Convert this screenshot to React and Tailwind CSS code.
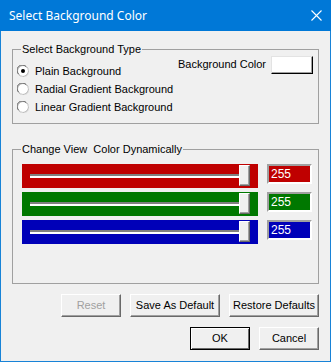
import React, { useState } from 'react';

const SLIDERS = [
  { key: 'r', bg: 'bg-[#bf0000]' },
  { key: 'g', bg: 'bg-[#007800]' },
  { key: 'b', bg: 'bg-[#0000b8]' },
];

const RADIOS = ['Plain Background', 'Radial Gradient Background', 'Linear Gradient Background'];

const Radio = ({ checked }) => (
  <svg width="12" height="12" viewBox="0 0 12 12" className="shrink-0">
    <circle cx="6" cy="6" r="5.5" fill="#ffffff" stroke="#a0a0a0" />
    <path d="M1.5 9 A5 5 0 0 1 9 1.5" fill="none" stroke="#696969" strokeWidth="1" />
    <path d="M3 10.5 A5 5 0 0 0 10.5 3" fill="none" stroke="#e3e3e3" strokeWidth="1" />
    {checked && <circle cx="6" cy="6" r="2" fill="#000000" />}
  </svg>
);

const Btn = ({ children, w, disabled, primary }) => (
  <button
    className={`h-[23px] ${w} bg-[#f0f0f0] text-[11px] leading-none border ${
      primary ? 'border-black' : 'border-t-white border-l-white border-b-[#696969] border-r-[#696969]'
    } ${primary ? 'shadow-[inset_1px_1px_0_#fff,inset_-1px_-1px_0_#696969]' : 'shadow-[inset_-1px_-1px_0_#a0a0a0]'} ${
      disabled ? 'text-[#a0a0a0]' : 'text-black'
    }`}
  >
    {children}
  </button>
);

export default function App() {
  const [type, setType] = useState(0);

  return (
    <div className="w-[331px] h-[362px] flex flex-col bg-[#f0f0f0] border-x border-b border-[#1883d7] font-['Liberation_Sans',Arial,sans-serif] text-[11px] text-black select-none">
      {/* title bar */}
      <div className="h-[31px] -mx-px bg-[#0078d7] flex items-center justify-between pl-[9px] pr-[9px] text-white font-['Noto_Sans',sans-serif] text-[12px]">
        <span>Select Background Color</span>
        <svg width="11" height="11" viewBox="0 0 11 11">
          <path d="M0.5 0.5 L10.5 10.5 M10.5 0.5 L0.5 10.5" stroke="#fff" strokeWidth="1.1" />
        </svg>
      </div>

      <div className="flex flex-col px-[11px]">
        {/* background type */}
        <fieldset className="mt-[12px] border border-[#a0a0a0] flex">
          <legend className="ml-[8px] px-[1px] leading-[13px]">Select Background Type</legend>
          <div className="flex w-full">
            <div className="flex flex-col pt-[6px] pb-[7px] pl-[4px] flex-1">
              {RADIOS.map((label, i) => (
                <div key={label} className="h-[18px] flex items-center gap-[6px] cursor-default" onClick={() => setType(i)}>
                  <Radio checked={type === i} />
                  <span>{label}</span>
                </div>
              ))}
            </div>
            <div className="flex items-start gap-[5px] pr-[5px]">
              <span className="leading-[17px]">Background Color</span>
              <div className="w-[42px] h-[18px] bg-white border border-t-[#e3e3e3] border-l-[#e3e3e3] border-b-black border-r-black shadow-[inset_-1px_-1px_0_#a0a0a0]" />
            </div>
          </div>
        </fieldset>

        {/* sliders */}
        <fieldset className="mt-[19px] border border-[#a0a0a0]">
          <legend className="ml-[8px] px-[1px] leading-[13px]">Change View&nbsp;&nbsp;Color Dynamically</legend>
          <div className="flex flex-col gap-[4px] pt-[8px] pb-[39px] pl-[9px]">
            {SLIDERS.map((s) => (
              <div key={s.key} className="flex items-start gap-[9px]">
                <div className={`w-[236px] h-[24px] ${s.bg} flex items-center pl-[8px] pr-[8px]`}>
                  <div className="relative flex-1 h-[4px] border-t-2 border-[#808080] bg-white">
                    <div className="absolute right-[0px] -top-[11px] w-[11px] h-[21px] bg-[#f0f0f0] border border-t-white border-l-white border-b-[#696969] border-r-[#696969] shadow-[inset_-1px_-1px_0_#a0a0a0]" />
                  </div>
                </div>
                <div className={`w-[45px] h-[20px] ${s.bg} border-2 border-t-[#a0a0a0] border-l-[#a0a0a0] border-b-white border-r-white text-white text-[12px] leading-[16px] pl-[2px]`}>
                  255
                </div>
              </div>
            ))}
          </div>
        </fieldset>

        {/* buttons */}
        <div className="flex justify-end gap-[9px] mt-[10px]">
          <Btn w="w-[60px]" disabled>Reset</Btn>
          <Btn w="w-[90px]">Save As Default</Btn>
          <Btn w="w-[90px]">Restore Defaults</Btn>
        </div>
        <div className="flex justify-end gap-[9px] mt-[10px]">
          <Btn w="w-[60px]" primary>OK</Btn>
          <Btn w="w-[60px]">Cancel</Btn>
        </div>
      </div>
    </div>
  );
}
